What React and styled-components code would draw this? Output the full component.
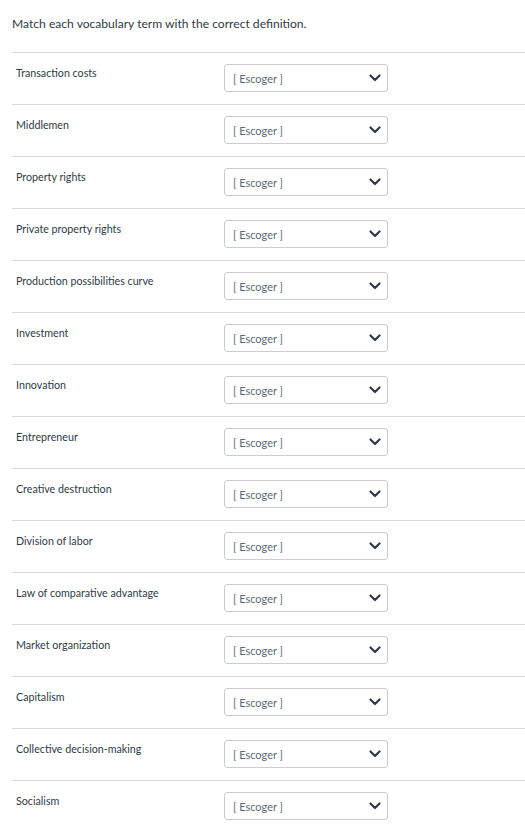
import React from "react";
import styled, { createGlobalStyle } from "styled-components";

const Global = createGlobalStyle`
  html, body { margin: 0; padding: 0; background: #fff; }
  body { font-family: Lato, "Noto Sans", sans-serif; color: #2d3b45; }
`;

const Page = styled.div`
  padding: 0 0 0 12px;
`;

const Prompt = styled.p`
  margin: 0;
  height: 53px;
  box-sizing: border-box;
  padding-top: 16px;
  font-size: 12.1px;
  line-height: 16px;
  color: #2d3b45;
  border-bottom: 1px solid #d8dcdf;
`;

const Row = styled.div`
  display: flex;
  align-items: flex-start;
  height: 52px;
  box-sizing: border-box;
  padding: 11px 0 0 4px;
  border-bottom: ${(p) => (p.$last ? "none" : "1px solid #d8dcdf")};
`;

const Term = styled.div`
  width: 208px;
  font-size: 10.7px;
  line-height: 14px;
  padding-top: 2px;
  color: #2d3b45;
`;

const Select = styled.div`
  display: flex;
  align-items: center;
  justify-content: space-between;
  width: 164px;
  height: 28px;
  box-sizing: border-box;
  border: 1px solid #c7cdd1;
  border-radius: 3px;
  padding: 0 6px 0 8px;
  background: #fff;
  font-size: 11px;
  color: #5a6a78;
`;

const Chevron = () => (
  <svg width="12" height="8" viewBox="0 0 12 8">
    <path d="M1.5 1.5 L6 6 L10.5 1.5" fill="none" stroke="#2d3b45" strokeWidth="2.2" strokeLinecap="round" strokeLinejoin="round" />
  </svg>
);

const terms = [
  "Transaction costs",
  "Middlemen",
  "Property rights",
  "Private property rights",
  "Production possibilities curve",
  "Investment",
  "Innovation",
  "Entrepreneur",
  "Creative destruction",
  "Division of labor",
  "Law of comparative advantage",
  "Market organization",
  "Capitalism",
  "Collective decision-making",
  "Socialism",
];

export default function App() {
  return (
    <Page>
      <Global />
      <Prompt>Match each vocabulary term with the correct definition.</Prompt>
      {terms.map((t, i) => (
        <Row key={t} $last={i === terms.length - 1}>
          <Term>{t}</Term>
          <Select>
            <span>[ Escoger ]</span>
            <Chevron />
          </Select>
        </Row>
      ))}
    </Page>
  );
}
